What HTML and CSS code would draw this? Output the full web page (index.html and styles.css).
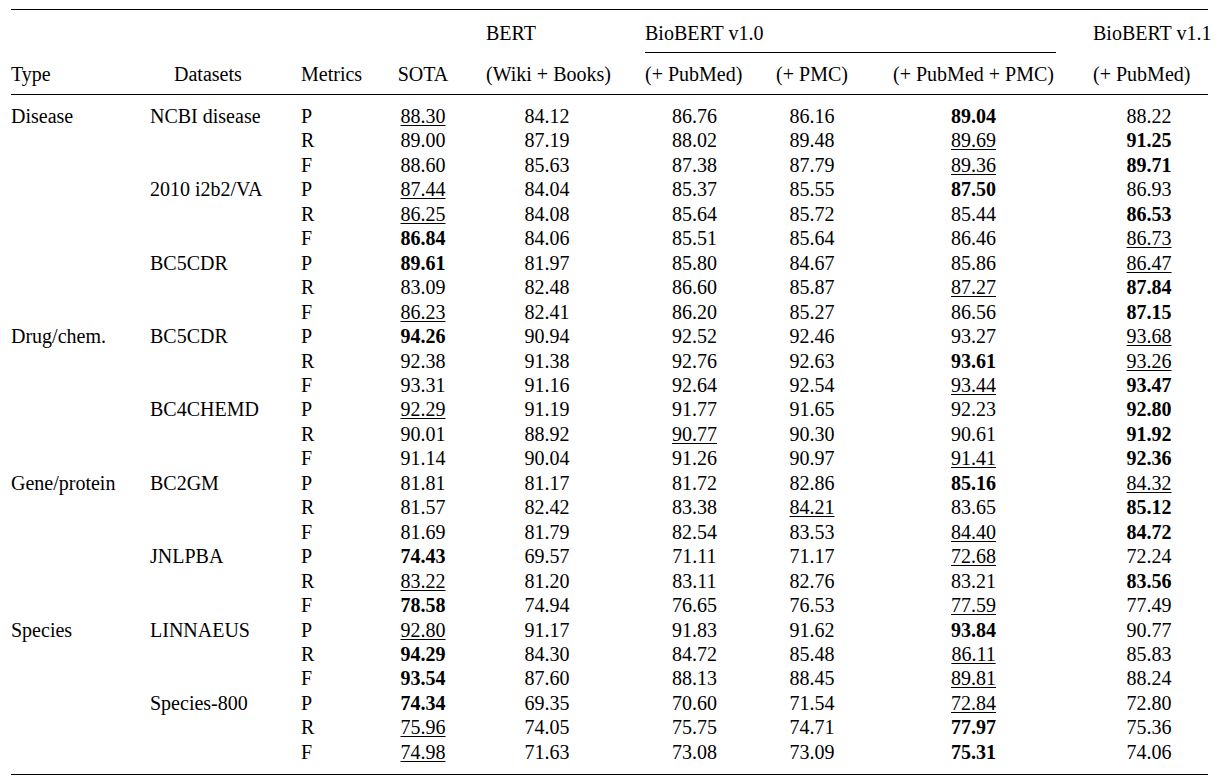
FILE: index.html
```html
<!DOCTYPE html>
<html lang="en">
<head>
<meta charset="utf-8">
<title>BioBERT NER results</title>
<link rel="stylesheet" href="styles.css">
</head>
<body>
<table class="results">
  <colgroup>
    <col class="c-type"><col class="c-data"><col class="c-metric"><col class="c-sota"><col class="c-bert"><col class="c-pm"><col class="c-pmc"><col class="c-both"><col class="c-v11">
  </colgroup>
  <thead>
    <tr class="h1">
      <th></th><th></th><th></th><th></th>
      <th class="h-bert">BERT</th>
      <th colspan="3" class="h-group"><div class="group-rule">BioBERT v1.0</div></th>
      <th class="h-v11">BioBERT v1.1</th>
    </tr>
    <tr class="h2">
      <th class="h-left">Type</th>
      <th class="h-datasets">Datasets</th>
      <th class="h-left">Metrics</th>
      <th class="h-center">SOTA</th>
      <th class="h-bert">(Wiki + Books)</th>
      <th class="h-pm">(+ PubMed)</th>
      <th class="h-center">(+ PMC)</th>
      <th class="h-center">(+ PubMed + PMC)</th>
      <th class="h-v11">(+ PubMed)</th>
    </tr>
  </thead>
  <tbody>
    <tr class="first"><td>Disease</td><td>NCBI disease</td><td>P</td><td class="n"><span class="u">88.30</span></td><td class="n">84.12</td><td class="n">86.76</td><td class="n">86.16</td><td class="n"><b>89.04</b></td><td class="n v">88.22</td></tr>
    <tr><td></td><td></td><td>R</td><td class="n">89.00</td><td class="n">87.19</td><td class="n">88.02</td><td class="n">89.48</td><td class="n"><span class="u">89.69</span></td><td class="n v"><b>91.25</b></td></tr>
    <tr><td></td><td></td><td>F</td><td class="n">88.60</td><td class="n">85.63</td><td class="n">87.38</td><td class="n">87.79</td><td class="n"><span class="u">89.36</span></td><td class="n v"><b>89.71</b></td></tr>
    <tr><td></td><td>2010 i2b2/VA</td><td>P</td><td class="n"><span class="u">87.44</span></td><td class="n">84.04</td><td class="n">85.37</td><td class="n">85.55</td><td class="n"><b>87.50</b></td><td class="n v">86.93</td></tr>
    <tr><td></td><td></td><td>R</td><td class="n"><span class="u">86.25</span></td><td class="n">84.08</td><td class="n">85.64</td><td class="n">85.72</td><td class="n">85.44</td><td class="n v"><b>86.53</b></td></tr>
    <tr><td></td><td></td><td>F</td><td class="n"><b>86.84</b></td><td class="n">84.06</td><td class="n">85.51</td><td class="n">85.64</td><td class="n">86.46</td><td class="n v"><span class="u">86.73</span></td></tr>
    <tr><td></td><td>BC5CDR</td><td>P</td><td class="n"><b>89.61</b></td><td class="n">81.97</td><td class="n">85.80</td><td class="n">84.67</td><td class="n">85.86</td><td class="n v"><span class="u">86.47</span></td></tr>
    <tr><td></td><td></td><td>R</td><td class="n">83.09</td><td class="n">82.48</td><td class="n">86.60</td><td class="n">85.87</td><td class="n"><span class="u">87.27</span></td><td class="n v"><b>87.84</b></td></tr>
    <tr><td></td><td></td><td>F</td><td class="n"><span class="u">86.23</span></td><td class="n">82.41</td><td class="n">86.20</td><td class="n">85.27</td><td class="n">86.56</td><td class="n v"><b>87.15</b></td></tr>
    <tr><td>Drug/chem.</td><td>BC5CDR</td><td>P</td><td class="n"><b>94.26</b></td><td class="n">90.94</td><td class="n">92.52</td><td class="n">92.46</td><td class="n">93.27</td><td class="n v"><span class="u">93.68</span></td></tr>
    <tr><td></td><td></td><td>R</td><td class="n">92.38</td><td class="n">91.38</td><td class="n">92.76</td><td class="n">92.63</td><td class="n"><b>93.61</b></td><td class="n v"><span class="u">93.26</span></td></tr>
    <tr><td></td><td></td><td>F</td><td class="n">93.31</td><td class="n">91.16</td><td class="n">92.64</td><td class="n">92.54</td><td class="n"><span class="u">93.44</span></td><td class="n v"><b>93.47</b></td></tr>
    <tr><td></td><td>BC4CHEMD</td><td>P</td><td class="n"><span class="u">92.29</span></td><td class="n">91.19</td><td class="n">91.77</td><td class="n">91.65</td><td class="n">92.23</td><td class="n v"><b>92.80</b></td></tr>
    <tr><td></td><td></td><td>R</td><td class="n">90.01</td><td class="n">88.92</td><td class="n"><span class="u">90.77</span></td><td class="n">90.30</td><td class="n">90.61</td><td class="n v"><b>91.92</b></td></tr>
    <tr><td></td><td></td><td>F</td><td class="n">91.14</td><td class="n">90.04</td><td class="n">91.26</td><td class="n">90.97</td><td class="n"><span class="u">91.41</span></td><td class="n v"><b>92.36</b></td></tr>
    <tr><td>Gene/protein</td><td>BC2GM</td><td>P</td><td class="n">81.81</td><td class="n">81.17</td><td class="n">81.72</td><td class="n">82.86</td><td class="n"><b>85.16</b></td><td class="n v"><span class="u">84.32</span></td></tr>
    <tr><td></td><td></td><td>R</td><td class="n">81.57</td><td class="n">82.42</td><td class="n">83.38</td><td class="n"><span class="u">84.21</span></td><td class="n">83.65</td><td class="n v"><b>85.12</b></td></tr>
    <tr><td></td><td></td><td>F</td><td class="n">81.69</td><td class="n">81.79</td><td class="n">82.54</td><td class="n">83.53</td><td class="n"><span class="u">84.40</span></td><td class="n v"><b>84.72</b></td></tr>
    <tr><td></td><td>JNLPBA</td><td>P</td><td class="n"><b>74.43</b></td><td class="n">69.57</td><td class="n">71.11</td><td class="n">71.17</td><td class="n"><span class="u">72.68</span></td><td class="n v">72.24</td></tr>
    <tr><td></td><td></td><td>R</td><td class="n"><span class="u">83.22</span></td><td class="n">81.20</td><td class="n">83.11</td><td class="n">82.76</td><td class="n">83.21</td><td class="n v"><b>83.56</b></td></tr>
    <tr><td></td><td></td><td>F</td><td class="n"><b>78.58</b></td><td class="n">74.94</td><td class="n">76.65</td><td class="n">76.53</td><td class="n"><span class="u">77.59</span></td><td class="n v">77.49</td></tr>
    <tr><td>Species</td><td>LINNAEUS</td><td>P</td><td class="n"><span class="u">92.80</span></td><td class="n">91.17</td><td class="n">91.83</td><td class="n">91.62</td><td class="n"><b>93.84</b></td><td class="n v">90.77</td></tr>
    <tr><td></td><td></td><td>R</td><td class="n"><b>94.29</b></td><td class="n">84.30</td><td class="n">84.72</td><td class="n">85.48</td><td class="n"><span class="u">86.11</span></td><td class="n v">85.83</td></tr>
    <tr><td></td><td></td><td>F</td><td class="n"><b>93.54</b></td><td class="n">87.60</td><td class="n">88.13</td><td class="n">88.45</td><td class="n"><span class="u">89.81</span></td><td class="n v">88.24</td></tr>
    <tr><td></td><td>Species-800</td><td>P</td><td class="n"><b>74.34</b></td><td class="n">69.35</td><td class="n">70.60</td><td class="n">71.54</td><td class="n"><span class="u">72.84</span></td><td class="n v">72.80</td></tr>
    <tr><td></td><td></td><td>R</td><td class="n"><span class="u">75.96</span></td><td class="n">74.05</td><td class="n">75.75</td><td class="n">74.71</td><td class="n"><b>77.97</b></td><td class="n v">75.36</td></tr>
    <tr class="last"><td></td><td></td><td>F</td><td class="n"><span class="u">74.98</span></td><td class="n">71.63</td><td class="n">73.08</td><td class="n">73.09</td><td class="n"><b>75.31</b></td><td class="n v">74.06</td></tr>
  </tbody>
</table>
</body>
</html>
```
FILE: styles.css
```css
html, body {
  margin: 0;
  padding: 0;
  background: #fff;
}

body {
  font-family: "Liberation Serif", "Times New Roman", serif;
  font-size: 20px;
  color: #000;
}

.results {
  margin: 9px 0 0 11px;
  width: 1197px;
  table-layout: fixed;
  border-collapse: separate;
  border-spacing: 0;
  border-top: 1px solid #000;
  border-bottom: 1px solid #000;
}

.c-type { width: 139px; }
.c-data { width: 151px; }
.c-metric { width: 84px; }
.c-sota { width: 76px; }
.c-bert { width: 172px; }
.c-pm { width: 123px; }
.c-pmc { width: 112px; }
.c-both { width: 211px; }
.c-v11 { width: 129px; }

th {
  font-weight: normal;
  text-align: left;
  white-space: nowrap;
  line-height: 24px;
  padding: 0;
}

.h1 th {
  padding-top: 11px;
  vertical-align: top;
}

.group-rule {
  margin: 0 23px 0 12px;
  padding-bottom: 7px;
  border-bottom: 1px solid #000;
}

.h2 th {
  padding-top: 9px;
  padding-bottom: 8px;
  border-bottom: 1px solid #000;
}

.h2 .h-datasets { padding-left: 24px; }
.h-center { text-align: center; }
.h1 .h-bert, .h2 .h-bert { padding-left: 25px; }
.h2 .h-pm { padding-left: 12px; }
.h1 .h-v11, .h2 .h-v11 { padding-left: 14px; }

td {
  padding: 0;
  line-height: 24.46px;
  white-space: nowrap;
  text-align: left;
}

td.n {
  text-align: center;
}

td.n.v {
  padding-left: 11px;
}

tr.first td { padding-top: 9px; }
tr.last td { padding-bottom: 9.6px; }

b { font-weight: bold; }

.u {
  text-decoration: underline;
  text-decoration-thickness: 1px;
  text-underline-offset: 2px;
}
```
